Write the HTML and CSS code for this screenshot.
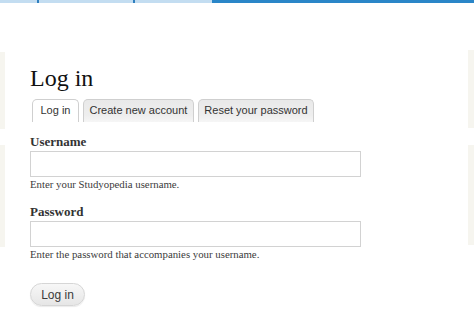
FILE: index.html
```html
<!DOCTYPE html>
<html lang="en">
<head>
<meta charset="utf-8">
<title>Log in | Studyopedia</title>
<link rel="stylesheet" href="styles.css">
</head>
<body>
<div class="topbar">
  <span class="seg seg-a"></span><span class="tick"></span><span class="seg seg-b"></span><span class="tick"></span><span class="seg seg-c"></span><span class="seg-dark"></span>
</div>
<div class="page">
  <div class="rail rail-left">
    <div class="rail-block rb-l1"></div>
    <div class="rail-block rb-l2"></div>
  </div>
  <main class="content">
    <h1 class="title">Log in</h1>
    <ul class="tabs">
      <li class="tab active">Log in</li>
      <li class="tab">Create new account</li>
      <li class="tab">Reset your password</li>
    </ul>
    <form class="login-form">
      <div class="form-item">
        <label class="label" for="name">Username</label>
        <input class="text-input" id="name" type="text">
        <div class="description">Enter your Studyopedia username.</div>
      </div>
      <div class="form-item second">
        <label class="label" for="pass">Password</label>
        <input class="text-input" id="pass" type="password">
        <div class="description">Enter the password that accompanies your username.</div>
      </div>
      <button class="button" type="button">Log in</button>
    </form>
  </main>
  <div class="rail rail-right">
    <div class="rail-block rb-r1"></div>
    <div class="rail-block rb-r2"></div>
  </div>
</div>
</body>
</html>
```
FILE: styles.css
```css
html, body {
  margin: 0;
  padding: 0;
  background: #ffffff;
}
body {
  width: 474px;
  height: 317px;
  overflow: hidden;
  font-family: "Liberation Serif", "DejaVu Serif", serif;
  color: #222;
}
.topbar {
  display: flex;
  height: 3px;
}
.seg {
  background: #c3ddf1;
}
.seg-a { width: 37px; }
.seg-b { width: 94px; }
.seg-c { width: 77px; }
.tick {
  width: 2px;
  background: #2f7fbf;
}
.seg-dark {
  flex: 1;
  background: #2a86c8;
}
.page {
  display: flex;
  justify-content: space-between;
}
.rail {
  display: flex;
  flex-direction: column;
}
.rail-left { width: 5px; }
.rail-right { width: 6px; }
.rail-block {
  background: #f6f5ef;
}
.rb-l1 { margin-top: 49px; height: 77px; }
.rb-l2 { margin-top: 16px; height: 102px; }
.rb-r1 { margin-top: 47px; height: 78px; }
.rb-r2 { margin-top: 17px; height: 100px; }
.content {
  flex: 1;
  padding-left: 25px;
}
.title {
  margin: 61px 0 0 0;
  font-size: 24px;
  line-height: 28px;
  font-weight: normal;
  color: #111;
}
.tabs {
  list-style: none;
  margin: 7px 0 0 2px;
  padding: 0;
  display: flex;
  gap: 4px;
}
.tab {
  font-family: "Liberation Sans", Arial, sans-serif;
  font-size: 11px;
  line-height: 13px;
  color: #333;
  padding: 4px 5.5px 5px;
  border: 1px solid #cfcfcf;
  border-bottom: none;
  border-radius: 5px 5px 0 0;
  background: linear-gradient(#e9e9e9, #eeeeee 70%, #f6f6f6);
}
.tab.active {
  background: #fff;
  padding-left: 7.5px;
  padding-right: 7.5px;
}
.login-form {
  margin-top: 12px;
}
.form-item.second {
  margin-top: 13px;
}
.label {
  display: block;
  font-weight: bold;
  font-size: 13px;
  line-height: 15px;
  color: #333;
  margin-bottom: 2px;
}
.text-input {
  display: block;
  box-sizing: border-box;
  width: 331px;
  height: 26px;
  margin: 0;
  border: 1px solid #d2d2d2;
  border-radius: 0;
  background: #fff;
}
.description {
  font-size: 10.8px;
  line-height: 14px;
  color: #3b3b3b;
}
.button {
  display: block;
  margin-top: 22px;
  height: 23px;
  width: 55px;
  padding: 0;
  font-family: "Liberation Sans", Arial, sans-serif;
  font-size: 12px;
  color: #3a3a3a;
  border: 1px solid #d6d6d6;
  border-radius: 12px;
  background: linear-gradient(#f7f7f7, #e6e6e6);
  box-shadow: 0 1px 1px rgba(0, 0, 0, 0.08);
}
```
